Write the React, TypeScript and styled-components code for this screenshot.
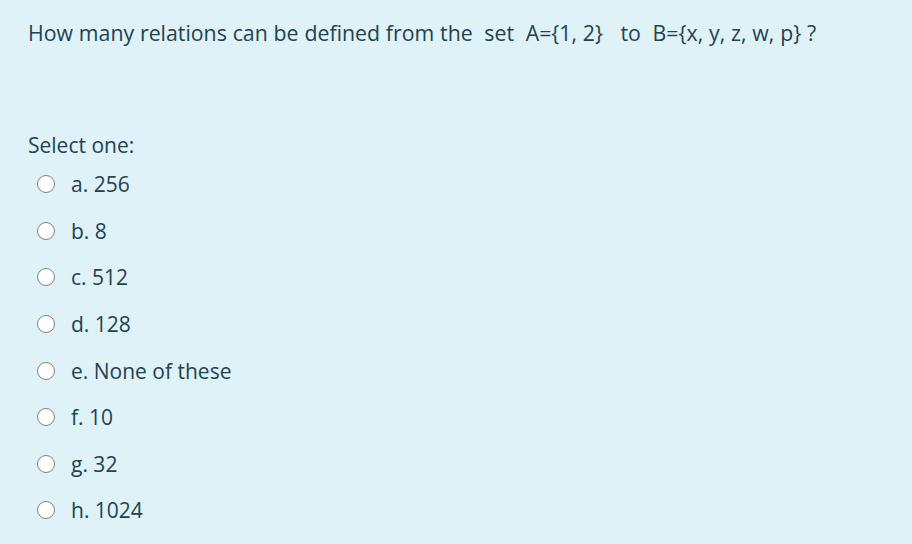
import styled, { createGlobalStyle } from "styled-components";

const GlobalStyle = createGlobalStyle`
  html, body {
    margin: 0;
    padding: 0;
    background: #def2f8;
  }
  body {
    font-family: "Open Sans", "Noto Sans", sans-serif;
    color: #24424f;
  }
`;

const Formulation = styled.div`
  width: 912px;
  height: 544px;
  box-sizing: border-box;
  background: #def2f8;
  padding: 18px 28px 0 28px;
`;

const QText = styled.p`
  margin: 0;
  font-size: 21.3px;
  line-height: 30px;
  word-spacing: 0.3px;
  white-space: pre;
`;

const Ablock = styled.div`
  margin-top: 82px;
`;

const Prompt = styled.div`
  font-size: 21px;
  line-height: 30px;
`;

const Answer = styled.div`
  display: flex;
  flex-direction: column;
  padding-left: 9px;
  margin-top: 1px;
`;

const Row = styled.label`
  display: flex;
  align-items: center;
  height: 46.57px;
  font-size: 21px;
`;

const Radio = styled.span`
  width: 16px;
  height: 16px;
  border-radius: 50%;
  border: 1.3px solid #808080;
  background: #fff;
  margin-right: 16px;
  flex-shrink: 0;
`;

const options = ["a. 256", "b. 8", "c. 512", "d. 128", "e. None of these", "f. 10", "g. 32", "h. 1024"];

export default function App() {
  return (
    <>
      <GlobalStyle />
      <Formulation>
        <QText>{"How many relations can be defined from the  set  A={1, 2}   to  B={x, y, z, w, p} ?"}</QText>
        <Ablock>
          <Prompt>Select one:</Prompt>
          <Answer>
            {options.map((o) => (
              <Row key={o}>
                <Radio />
                {o}
              </Row>
            ))}
          </Answer>
        </Ablock>
      </Formulation>
    </>
  );
}
